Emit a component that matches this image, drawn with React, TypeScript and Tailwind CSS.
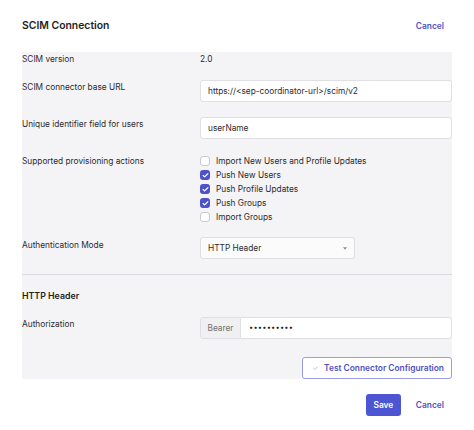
import { Check } from 'lucide-react';

const actions = [
  { label: 'Import New Users and Profile Updates', checked: false },
  { label: 'Push New Users', checked: true },
  { label: 'Push Profile Updates', checked: true },
  { label: 'Push Groups', checked: true },
  { label: 'Import Groups', checked: false },
];

function Row({ label, children }: { label: string; children: React.ReactNode }) {
  return (
    <div className="grid grid-cols-[178px_1fr]">
      <div className="text-[#2b2b30]">{label}</div>
      <div>{children}</div>
    </div>
  );
}

function Box({ checked }: { checked: boolean }) {
  if (checked) {
    return (
      <span className="flex size-[10px] items-center justify-center rounded-[3px] bg-[#4e52c9]">
        <Check className="size-[7px] text-white" strokeWidth={4} />
      </span>
    );
  }
  return <span className="size-[10px] rounded-[3px] border border-[#c9c9cf] bg-white" />;
}

export default function App() {
  return (
    <div className="h-[430px] w-[474px] bg-white px-[22px] pt-[18px] font-['Inter',sans-serif] text-[8.3px] leading-[14px] text-[#2b2b30]">
      <div className="flex h-4 items-center justify-between">
        <h1 className="text-[10.4px] font-semibold text-[#1f1f24]">SCIM Connection</h1>
        <button className="px-2 text-[8.4px] font-semibold text-[#4e52c4]">Cancel</button>
      </div>

      <div className="mt-[18px] flex flex-col bg-[#f4f4f6]">
        <Row label="SCIM version">
          <span>2.0</span>
        </Row>

        <div className="mt-[14px]">
          <Row label="SCIM connector base URL">
            <div className="flex h-[22px] items-center rounded-[3px] border border-[#e0e0e4] bg-white px-[7px]">
              https://&lt;sep-coordinator-url&gt;/scim/v2
            </div>
          </Row>
        </div>

        <div className="mt-[15px]">
          <Row label="Unique identifier field for users">
            <div className="flex h-[22px] items-center rounded-[3px] border border-[#e0e0e4] bg-white px-[7px]">
              userName
            </div>
          </Row>
        </div>

        <div className="mt-[15px]">
          <Row label="Supported provisioning actions">
            <div className="flex flex-col">
              {actions.map((a) => (
                <label key={a.label} className="flex h-[14px] items-center gap-[6px]">
                  <Box checked={a.checked} />
                  {a.label}
                </label>
              ))}
            </div>
          </Row>
        </div>

        <div className="mt-[14px]">
          <Row label="Authentication Mode">
            <div className="-mt-px flex h-[22px] w-[155px] items-center justify-between rounded-[3px] border border-[#dedee3] bg-[#fbfbfc] pl-[7px] pr-[7px]">
              HTTP Header
              <svg viewBox="0 0 6 4" className="h-[3px] w-[4px] text-[#8a8a90]">
                <path d="M0 0h6L3 4z" fill="currentColor" />
              </svg>
            </div>
          </Row>
        </div>

        <div className="mt-[15px] h-px bg-[#dcdce0]" />

        <div className="mt-[14px] text-[8.8px] font-semibold text-[#1f1f24]">HTTP Header</div>

        <div className="mt-[14px]">
          <Row label="Authorization">
            <div className="flex h-[22px] overflow-hidden rounded-[3px] border border-[#e0e0e4] bg-white">
              <span className="flex w-10 items-center justify-center border-r border-[#e0e0e4] bg-[#f0f0f2] text-[#707076]">
                Bearer
              </span>
              <span className="flex items-center pl-2 text-[7.5px] tracking-[0.2px] text-[#1f1f24]">••••••••••</span>
            </div>
          </Row>
        </div>

        <div className="mt-[18px] flex justify-end">
          <button className="flex h-[22px] items-center gap-[6px] rounded-[3px] border border-[#9a9de0] bg-white pl-[10px] pr-[7px] text-[8.4px] font-semibold text-[#4e52c4]">
            <Check className="size-[5px] text-[#8a8dd6]" strokeWidth={3} />
            Test Connector Configuration
          </button>
        </div>
      </div>

      <div className="mt-[15px] flex items-center justify-end">
        <button className="h-[22px] w-[35px] rounded-[3px] bg-[#4c56d3] text-[8.4px] font-semibold text-white">Save</button>
        <button className="ml-[7px] px-2 text-[8.4px] font-semibold text-[#4e52c4]">Cancel</button>
      </div>
    </div>
  );
}
